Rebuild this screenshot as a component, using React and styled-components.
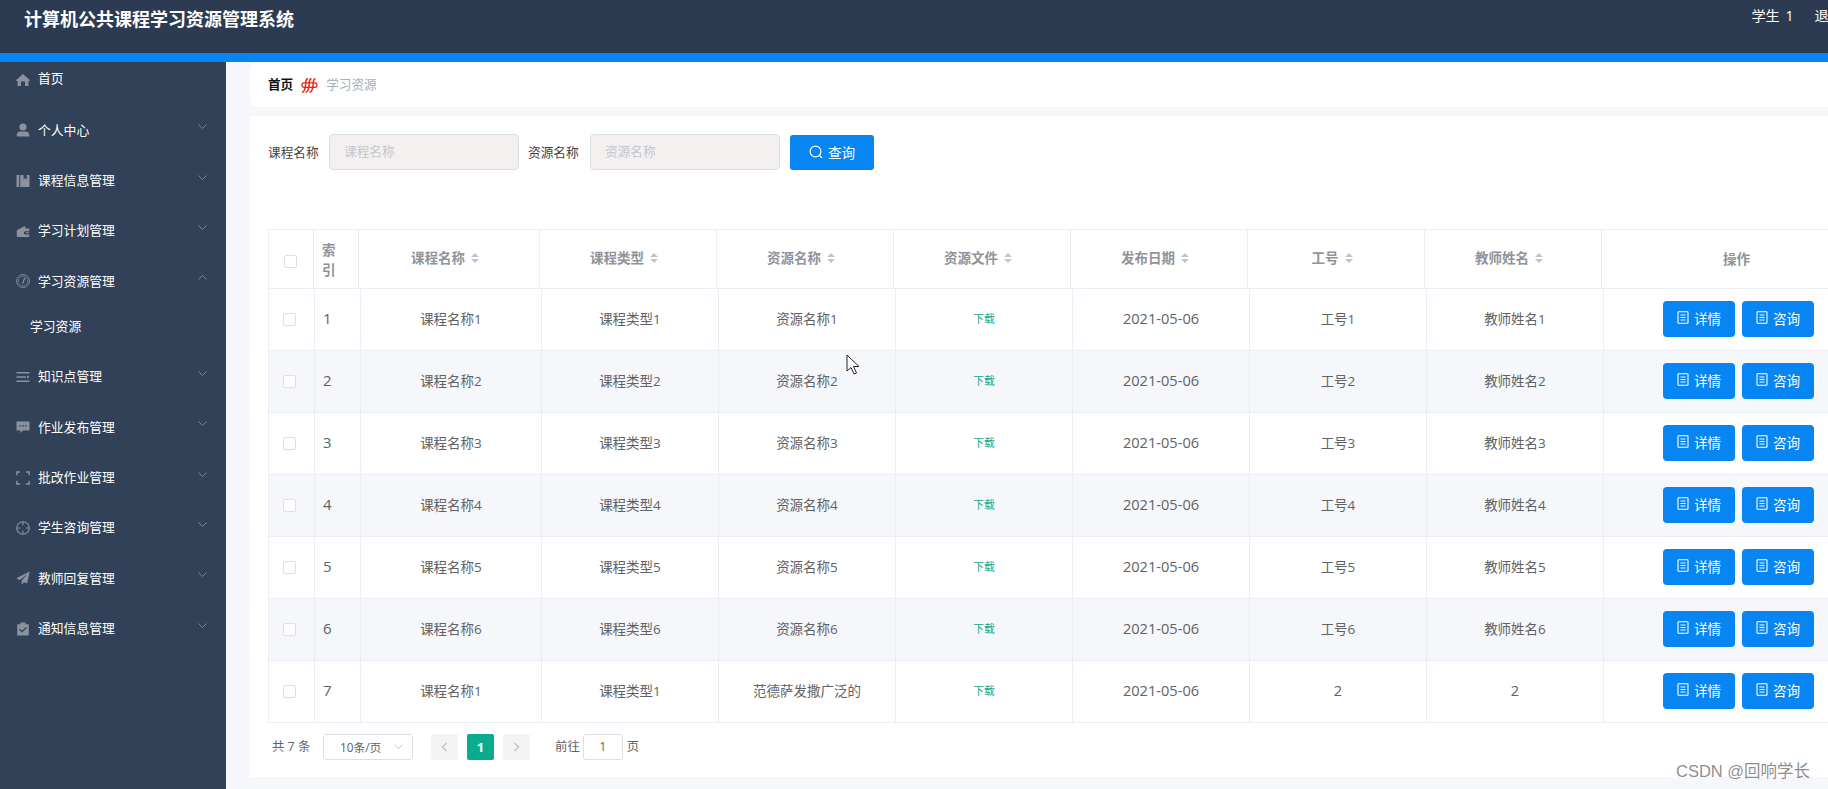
import React from "react";
import styled, { createGlobalStyle } from "styled-components";

const FONT = `"Open Sans", "Noto Sans CJK SC", sans-serif`;

const Global = createGlobalStyle`
  html, body { margin: 0; padding: 0; height: 100%; overflow: hidden; }
  body { font-family: ${FONT}; background: #f6f7fa; }
  #root { height: 100%; }
  * { box-sizing: border-box; }
`;

const Page = styled.div`
  position: relative;
  width: 1828px;
  height: 789px;
  overflow: hidden;
  display: flex;
  flex-direction: column;
`;
const TopBar = styled.header`
  height: 53px;
  flex: none;
  background: #2c3b51;
  color: #fff;
  display: flex;
  align-items: flex-start;
  padding: 5px 0 0 24px;
  overflow: hidden;
`;
const Title = styled.h1`
  margin: 0;
  font-size: 18px;
  line-height: 26px;
  font-weight: 700;
  white-space: nowrap;
  font-family: "Noto Sans CJK SC", sans-serif;
`;
const UserBox = styled.div`
  margin-left: auto;
  margin-right: -15px;
  margin-top: -1px;
  display: flex;
  gap: 21px;
  font-size: 14.2px;
  word-spacing: 2px;
  line-height: 24px;
  white-space: nowrap;
`;
const BlueBar = styled.div`
  height: 9px;
  flex: none;
  background: #0785f2;
`;
const Body = styled.div`
  flex: 1;
  min-height: 0;
  display: flex;
`;
const Sidebar = styled.nav`
  width: 226px;
  flex: none;
  background: #304158;
  color: #fff;
`;
const NavRow = styled.div`
  height: ${(p) => (p.$first ? "43px" : "50.4px")};
  padding: ${(p) => (p.$first ? "0 19px 11px 16px" : "0 19px 0 16px")};
  display: flex;
  align-items: center;
  font-size: 12.8px;
  white-space: nowrap;
`;
const NavLabel = styled.span`
  margin-bottom: 2px;
`;
const NavIcon = styled.svg`
  width: 14px;
  height: 14px;
  flex: none;
  margin-right: 8px;
  color: #8b929d;
  fill: currentColor;
  transform: translateY(${(p) => (p.$first ? "2px" : "0")});
`;
const Chevron = styled.svg`
  width: 9px;
  height: 5px;
  margin-left: auto;
  margin-bottom: 7px;
  fill: none;
  stroke: #77869a;
  stroke-width: 1;
`;
const NavSub = styled.div`
  height: 45px;
  padding: 0 0 7px 30px;
  display: flex;
  align-items: center;
  font-size: 12.8px;
`;
const Main = styled.main`
  flex: 1;
  min-width: 0;
  padding-left: 24px;
  display: flex;
  flex-direction: column;
  gap: 9px;
`;
const Crumbs = styled.div`
  height: 45px;
  flex: none;
  background: #fff;
  border-radius: 8px 0 0 8px;
  padding: 0 0 2px 18px;
  display: flex;
  align-items: center;
  font-size: 12.6px;
  font-weight: 500;
`;
const CrumbHome = styled.span`
  color: #111;
  font-weight: 700;
  font-family: "Noto Sans CJK SC", sans-serif;
`;
const CrumbCurrent = styled.span`
  color: #a3aec0;
  margin-left: 8px;
  font-weight: 400;
`;
const CrumbSep = styled.svg`
  width: 17px;
  height: 15px;
  margin: 3px 0 0 8px;
  fill: none;
`;
const Card = styled.section`
  height: 661px;
  flex: none;
  background: #fff;
  padding: 18px 0 0 18px;
  overflow: hidden;
`;
const FilterBar = styled.div`
  display: flex;
  align-items: center;
  height: 36px;
  margin-bottom: 59px;
`;
const FilterLabel = styled.label`
  width: ${(p) => p.$w}px;
  flex: none;
  font-size: 12.7px;
  color: #444;
  white-space: nowrap;
  padding-bottom: 2px;
`;
const FakeInput = styled.div`
  width: 190px;
  height: 36px;
  flex: none;
  margin-right: ${(p) => p.$gap}px;
  padding: 0 14px 3px;
  display: flex;
  align-items: center;
  background: #f5f0f0;
  border: 1px solid #dcdfe3;
  border-radius: 4px;
  font-size: 12.7px;
  color: #c3c7ce;
`;
const SearchBtn = styled.button`
  width: 84px;
  height: 35px;
  border: none;
  border-radius: 3px;
  background: #0785f2;
  color: #fff;
  display: flex;
  align-items: center;
  justify-content: center;
  gap: 5px;
  font: 13.6px ${FONT};
  padding: 0 0 1px;
`;
const Table = styled.table`
  table-layout: fixed;
  border-collapse: separate;
  border-spacing: 0;
  width: ${(p) => p.$w}px;
  font-size: 13.5px;
  color: #606266;
`;
const HeadTable = styled(Table)`
  border-top: 1px solid #ebeef5;
  border-left: 1px solid #ebeef5;
`;
const BodyTable = styled(Table)`
  border-left: 1px solid #ebeef5;
`;
const Th = styled.th`
  height: 59px;
  border-right: 1px solid #ebeef5;
  border-bottom: 1px solid #ebeef5;
  text-align: ${(p) => (p.$left ? "left" : "center")};
  padding: ${(p) => p.$pad || "0"};
  color: #909399;
  font-weight: 700;
  font-family: "Noto Sans CJK SC", sans-serif;
  font-size: 13.5px;
  line-height: 20px;
`;
const Td = styled.td`
  height: 62px;
  padding: ${(p) => p.$pad || "0 0 4px"};
  border-right: 1px solid #ebeef5;
  border-bottom: 1px solid #ebeef5;
  text-align: ${(p) => (p.$left ? "left" : "center")};
  background: ${(p) => (p.$alt ? "#f5f7fb" : "#fff")};
`;
const Num = styled.span`
  font-size: 14.6px;
`;
const Index = styled.span`
  font-size: 15px;
`;
const Check = styled.span`
  display: inline-block;
  width: 13px;
  height: 13px;
  border: 1px solid #dcdfe6;
  border-radius: 2px;
  background: #fff;
  vertical-align: middle;
`;
const SortCaret = styled.span`
  display: inline-flex;
  flex-direction: column;
  gap: 2px;
  margin-left: 6px;
  vertical-align: middle;
  position: relative;
  top: -1px;
  &::before, &::after {
    content: "";
    width: 0;
    height: 0;
    border-left: 4px solid transparent;
    border-right: 4px solid transparent;
  }
  &::before { border-bottom: 4px solid #c0c4cc; }
  &::after { border-top: 4px solid #c0c4cc; }
`;
const DownloadLink = styled.span`
  color: #14a98d;
  font-size: 10.8px;
`;
const ActionGroup = styled.div`
  display: flex;
  justify-content: center;
  gap: 7px;
`;
const ActionBtn = styled.button`
  width: 72px;
  height: 36px;
  border: none;
  border-radius: 4px;
  background: #0785f2;
  color: #fff;
  display: flex;
  align-items: center;
  justify-content: center;
  gap: 5px;
  font: 13.6px ${FONT};
  padding: 0 0 2px;
  svg { width: 12px; height: 13px; fill: none; stroke: currentColor; stroke-width: 1.1; }
`;
const Pager = styled.div`
  display: flex;
  align-items: center;
  height: 26px;
  margin-top: 11px;
  padding-left: 4px;
  font-size: 12.4px;
  color: #606266;
`;
const PagerText = styled.span`
  margin-bottom: 2px;
  white-space: nowrap;
  width: ${(p) => (p.$w ? `${p.$w}px` : "auto")};
  flex: none;
`;
const SizeSelect = styled.div`
  width: 90px;
  height: 26px;
  flex: none;
  border: 1px solid #dcdfe6;
  border-radius: 3px;
  display: flex;
  align-items: center;
  padding: 0 9px 2px 16px;
  margin: 0 18px 0 -2px;
  font-size: 11.8px;
  svg { margin-left: auto; width: 9px; height: 5px; fill: none; stroke: #c0c4cc; stroke-width: 1; }
`;
const PageBtn = styled.div`
  width: 27px;
  height: 26px;
  flex: none;
  margin-right: ${(p) => p.$gap}px;
  border-radius: 2px;
  background: ${(p) => (p.$active ? "#0bab90" : "#f4f4f5")};
  color: ${(p) => (p.$active ? "#fff" : "#c0c4cc")};
  font-weight: 700;
  font-size: 13px;
  display: flex;
  align-items: center;
  justify-content: center;
  svg { width: 7px; height: 10px; fill: none; stroke: currentColor; stroke-width: 1.5; }
`;
const JumpInput = styled.div`
  width: 40px;
  height: 26px;
  flex: none;
  margin: 0 4px 0 3px;
  padding-bottom: 2px;
  border: 1px solid #dcdfe6;
  border-radius: 3px;
  display: flex;
  align-items: center;
  justify-content: center;
`;
const Watermark = styled.div`
  position: absolute;
  left: 1676px;
  top: 760px;
  font-size: 16.5px;
  line-height: 22px;
  color: rgba(120, 120, 120, 0.85);
  white-space: nowrap;
  font-family: "Liberation Sans", "Noto Sans CJK SC", sans-serif;
`;
const Cursor = styled.svg`
  position: absolute;
  left: 846px;
  top: 354px;
  width: 14px;
  height: 21px;
`;

const DOC = (
  <svg viewBox="0 0 12 13">
    <rect x="1" y="0.8" width="10" height="11.4" rx="0.5" />
    <path d="M3.5 4h5M3.5 6.5h5M3.5 9h5" />
  </svg>
);
const DOWN = (
  <svg viewBox="0 0 9 5"><path d="M0.5 0.5l4 4 4-4" /></svg>
);

const icons = {
  home: <path d="M7 1l7 6.3-.9.9-.6-.5V13H9V8.6H5V13H1.5V7.7l-.6.5L0 7.3z" />,
  user: (
    <>
      <circle cx="7" cy="4" r="3.6" />
      <path d="M0.8 13.4v-1.8c0-2.2 2-3.2 3.6-3.2h5.2c1.6 0 3.6 1 3.6 3.2v1.8z" />
    </>
  ),
  book: <path d="M0.5 1h2.7v12H0.5zM4.2 1h3.4v4.5l1.6-1.4 1.6 1.4V1h2.7v12H4.2z" />,
  wallet: <path d="M1 6.3L8.6 2l1.3 2.6h3.4v2.6H9.4a1.6 1.6 0 000 3.2h3.9V13H.8V6.3zM9.6 8.2h3.7v1.1H9.6z" />,
  gauge: (
    <g fill="none" stroke="currentColor" strokeWidth="1">
      <circle cx="7" cy="7" r="6.4" />
      <circle cx="7" cy="7" r="4.6" strokeWidth="0.6" />
      <path d="M8.8 3.8L6.6 9.6" strokeWidth="1.3" />
    </g>
  ),
  list: <path d="M0.5 2h13v1.6H.5zM.5 6.2h9.5v1.6H.5zM.5 10.4h13V12H.5zM11 5.3l2.5 1.7L11 8.7z" />,
  comment: (
    <path
      fillRule="evenodd"
      d="M.5 1.5h13v9H7.2L4.5 13v-2.5h-4zM3.4 5v1.4h1.4V5zM6.3 5v1.4h1.4V5zM9.2 5v1.4h1.4V5z"
    />
  ),
  full: (
    <path
      fill="none"
      stroke="currentColor"
      strokeWidth="1.4"
      d="M4 1H.8v3.2M10 1h3.2v3.2M4 13H.8V9.8M10 13h3.2V9.8"
    />
  ),
  target: (
    <g fill="none" stroke="currentColor" strokeWidth="1.1">
      <circle cx="7" cy="7" r="6.3" />
      <path d="M7 .7v3.5M7 9.8v3.5M.7 7h3.5M9.8 7h3.5" />
    </g>
  ),
  plane: <path d="M13.8.4L.2 7.2l3.6 1.7 7.4-5.6-5.6 6.4v4l2.4-2.5 3 1.2z" />,
  clip: (
    <path
      fillRule="evenodd"
      d="M1.2 2.2h3.2V.6h5.2v1.6h3.2v11.4H1.2zM3 7.7l.9-.9 2.1 2 4-3.7.9.9-4.9 4.6z"
    />
  ),
};

const NAV = [
  ["首页", "home", null],
  ["个人中心", "user", "down"],
  ["课程信息管理", "book", "down"],
  ["学习计划管理", "wallet", "down"],
  ["学习资源管理", "gauge", "up"],
  ["知识点管理", "list", "down"],
  ["作业发布管理", "comment", "down"],
  ["批改作业管理", "full", "down"],
  ["学生咨询管理", "target", "down"],
  ["教师回复管理", "plane", "down"],
  ["通知信息管理", "clip", "down"],
];

const HEAD_COLS = [45, 45, 181, 177, 177, 177, 177, 177, 177, 270];
const BODY_COLS = [46, 46, 181, 177, 177, 177, 177, 177, 177, 270];
const HEADS = ["课程名称", "课程类型", "资源名称", "资源文件", "发布日期", "工号", "教师姓名"];

const ROWS = [1, 2, 3, 4, 5, 6].map((n) => [
  n,
  `课程名称${n}`,
  `课程类型${n}`,
  `资源名称${n}`,
  "2021-05-06",
  `工号${n}`,
  `教师姓名${n}`,
]);
ROWS.push([7, "课程名称1", "课程类型1", "范德萨发撒广泛的", "2021-05-06", "2", "2"]);

const Cols = ({ list }) => (
  <colgroup>
    {list.map((w, i) => (
      <col key={i} style={{ width: w }} />
    ))}
  </colgroup>
);

export default function App() {
  return (
    <Page>
      <Global />
      <TopBar>
        <Title>计算机公共课程学习资源管理系统</Title>
        <UserBox>
          <span>学生 1</span>
          <span>退出</span>
        </UserBox>
      </TopBar>
      <BlueBar />
      <Body>
        <Sidebar>
          {NAV.map(([label, icon, arrow], i) => (
            <React.Fragment key={label}>
              <NavRow $first={i === 0}>
                <NavIcon viewBox="0 0 14 14" $first={i === 0}>
                  {icons[icon]}
                </NavIcon>
                <NavLabel>{label}</NavLabel>
                {arrow && (
                  <Chevron viewBox="0 0 9 5">
                    <path d={arrow === "up" ? "M.5 4.5l4-4 4 4" : "M.5.5l4 4 4-4"} />
                  </Chevron>
                )}
              </NavRow>
              {arrow === "up" && <NavSub>学习资源</NavSub>}
            </React.Fragment>
          ))}
        </Sidebar>
        <Main>
          <Crumbs>
            <CrumbHome>首页</CrumbHome>
            <CrumbSep viewBox="0 0 17 15">
              <g stroke="#e8230f" strokeWidth="1.5">
                <path d="M7 .7C4 .7 5 5 4.500 8S3.500 14.300 1 14.300" />
                <path d="M10.500 .7C7.500 .7 8.500 5 8 8S7 14.300 4.500 14.300" />
                <path d="M14.500 .7c-3 0-2 4.300-2.500 7.300S11 14.300 8.500 14.300" />
                <path d="M3 4.800h11c2.500 0 2.500 4.500 0 4.500H3c-2.800 0-2.800-4.500 0-4.500z" strokeWidth="1.2" />
              </g>
            </CrumbSep>
            <CrumbCurrent>学习资源</CrumbCurrent>
          </Crumbs>
          <Card>
            <FilterBar>
              <FilterLabel $w={61}>课程名称</FilterLabel>
              <FakeInput $gap={9}>课程名称</FakeInput>
              <FilterLabel $w={62}>资源名称</FilterLabel>
              <FakeInput $gap={10}>资源名称</FakeInput>
              <SearchBtn>
                <svg width="14" height="14" viewBox="0 0 14 14" fill="none" stroke="#fff" strokeWidth="1.2">
                  <circle cx="6.500" cy="6.500" r="5.400" />
                  <path d="M10.500 10.500L13 13" />
                </svg>
                查询
              </SearchBtn>
            </FilterBar>
            <HeadTable $w={1604}>
              <Cols list={HEAD_COLS} />
              <thead>
                <tr>
                  <Th $pad="0 2px 0 0"><Check /></Th>
                  <Th $left $pad="0 0 0 8px">索<br />引</Th>
                  {HEADS.map((h) => (
                    <Th key={h} $pad="0 8px 4px 0">{h}<SortCaret /></Th>
                  ))}
                  <Th $pad="0 0 2px">操作</Th>
                </tr>
              </thead>
            </HeadTable>
            <BodyTable $w={1606}>
              <Cols list={BODY_COLS} />
              <tbody>
                {ROWS.map((r, i) => {
                  const alt = i % 2 === 1;
                  return (
                    <tr key={i}>
                      <Td $alt={alt} $pad="0 4px 2px 0"><Check /></Td>
                      <Td $alt={alt} $left $pad="0 0 4px 8px"><Index>{r[0]}</Index></Td>
                      <Td $alt={alt}>{r[1]}</Td>
                      <Td $alt={alt}>{r[2]}</Td>
                      <Td $alt={alt}>{r[3]}</Td>
                      <Td $alt={alt}><DownloadLink>下载</DownloadLink></Td>
                      <Td $alt={alt}><Num>{r[4]}</Num></Td>
                      <Td $alt={alt}>{i === 6 ? <Num>{r[5]}</Num> : r[5]}</Td>
                      <Td $alt={alt}>{i === 6 ? <Num>{r[6]}</Num> : r[6]}</Td>
                      <Td $alt={alt} $pad="0 0 2px">
                        <ActionGroup>
                          <ActionBtn>{DOC}详情</ActionBtn>
                          <ActionBtn>{DOC}咨询</ActionBtn>
                        </ActionGroup>
                      </Td>
                    </tr>
                  );
                })}
              </tbody>
            </BodyTable>
            <Pager>
              <PagerText $w={53}>共 7 条</PagerText>
              <SizeSelect>10条/页{DOWN}</SizeSelect>
              <PageBtn $gap={9}>
                <svg viewBox="0 0 7 10"><path d="M5.500 1l-4 4 4 4" /></svg>
              </PageBtn>
              <PageBtn $gap={9} $active>1</PageBtn>
              <PageBtn $gap={25}>
                <svg viewBox="0 0 7 10"><path d="M1.500 1l4 4-4 4" /></svg>
              </PageBtn>
              <PagerText>前往</PagerText>
              <JumpInput>1</JumpInput>
              <PagerText>页</PagerText>
            </Pager>
          </Card>
        </Main>
      </Body>
      <Watermark>CSDN @回响学长</Watermark>
      <Cursor viewBox="0 0 14 21">
        <path d="M1 1v16l4-3.500 3 6.500 2.500-1-3-6.500H13z" fill="#fff" stroke="#222" strokeWidth="1" />
      </Cursor>
    </Page>
  );
}
